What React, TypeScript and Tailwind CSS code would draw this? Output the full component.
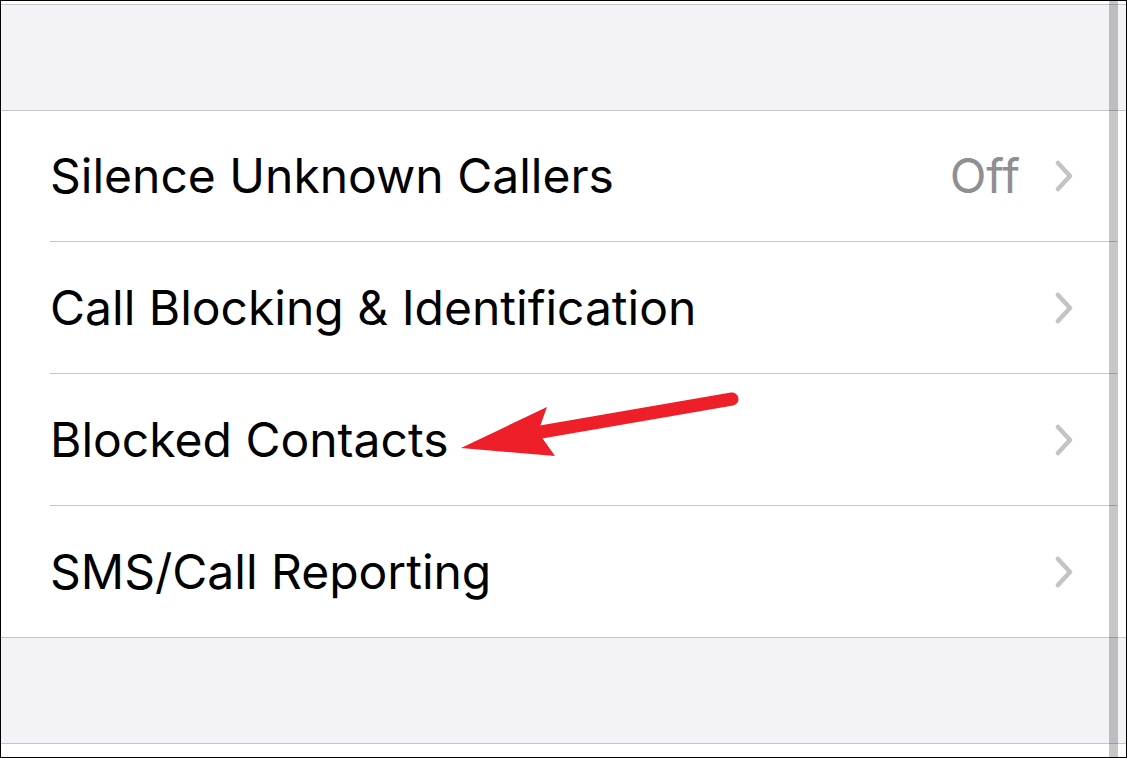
import React from "react";

function Chevron() {
  return (
    <svg width="20" height="32" viewBox="0 0 20 32" className="shrink-0">
      <path d="M4 3 L16 16 L4 29" fill="none" stroke="#c4c4c7" strokeWidth="4.5" strokeLinecap="round" strokeLinejoin="round" />
    </svg>
  );
}

function Row({ label, value, last, h }: { label: string; value?: string; last?: boolean; h: string }) {
  return (
    <div className={`flex flex-col bg-white ${h}`}>
      <div className="flex flex-1 items-center pl-[49px] pr-[52px]">
        <span className="flex-1 text-[48px] leading-none text-black">{label}</span>
        {value && <span className="mr-[34px] text-[48px] leading-none text-[#8e8e93]">{value}</span>}
        <Chevron />
      </div>
      {last ? (
        <div className="h-px bg-[#c6c6c8]" />
      ) : (
        <div className="ml-[49px] mr-[9px] h-px bg-[#c6c6c8]" />
      )}
    </div>
  );
}

export default function App() {
  return (
    <div
      className="relative flex h-[758px] w-[1127px] flex-col overflow-hidden border border-black bg-white"
      style={{ fontFamily: "Inter, 'Liberation Sans', sans-serif" }}
    >
      <div className="h-[4px] border-b border-[#c6c6c8] bg-white" />
      <div className="h-[106px] border-b border-[#c6c6c8] bg-[#f2f2f7]" />
      <Row h="h-[131px]" label="Silence Unknown Callers" value="Off" />
      <Row h="h-[132px]" label="Call Blocking & Identification" />
      <Row h="h-[132px]" label="Blocked Contacts" />
      <Row h="h-[132px]" label="SMS/Call Reporting" last />
      <div className="h-[106px] border-b border-[#c6c6c8] bg-[#f2f2f7]" />
      <div className="flex-1 bg-white" />

      {/* scrollbar */}
      <div className="absolute right-[8px] top-0 h-full w-[9px] bg-[rgba(0,0,0,0.22)]" />

      {/* red arrow annotation */}
      <svg className="pointer-events-none absolute left-[-1px] top-[-1px]" width="1127" height="758">
        <line x1="541" y1="432" x2="732" y2="399" stroke="#ee1f28" strokeWidth="13" strokeLinecap="round" />
        <polygon points="461,448 547,407 538,432 555,456" fill="#ee1f28" />
      </svg>
    </div>
  );
}
